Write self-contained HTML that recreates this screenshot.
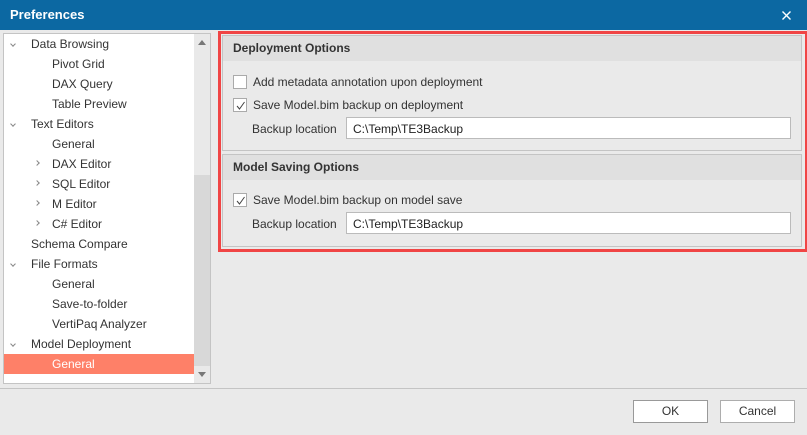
<!DOCTYPE html><html><head><style>
body{margin:0;width:807px;height:435px;background:#eaeaea;font-family:"Liberation Sans",sans-serif;font-size:12px;color:#333;position:relative;overflow:hidden}
.a{position:absolute}
.t{white-space:nowrap}
.cb{position:absolute;width:14px;height:14px;border:1px solid #aaa;background:#fff;box-sizing:border-box}
.cb svg{position:absolute;left:1px;top:1px}
.inp{position:absolute;background:#fff;border:1px solid #bbb;box-sizing:border-box;height:22px;padding:4px 6px;font-size:12px;color:#222}
.btn{position:absolute;background:#fff;border:1px solid #adadad;box-sizing:border-box;height:23px;width:75px;text-align:center;line-height:21px;color:#333}
.chev{position:absolute;left:11px;width:3px;height:3px;border-right:1px solid #888;border-bottom:1px solid #888;transform:rotate(45deg)}
.chr{position:absolute;left:35px;width:3px;height:3px;border-right:1px solid #888;border-bottom:1px solid #888;transform:rotate(-45deg)}
</style></head><body>
<div class="a" style="left:0;top:0;width:807px;height:30px;background:#0c68a2"></div>
<div class="a t" style="left:10px;top:7px;color:#fff;font-weight:bold;font-size:13px">Preferences</div>
<svg class="a" style="left:782px;top:11px" width="9" height="9"><path d="M0.5 0.5L8.5 8.5M8.5 0.5L0.5 8.5" stroke="#fff" stroke-width="1.4"/></svg>

<div class="a" style="left:3px;top:33px;width:208px;height:351px;background:#fff;border:1px solid #c4c4c4;box-sizing:border-box"></div>
<div class="a" style="left:194px;top:34px;width:16px;height:349px;background:#e9e9e9"></div>
<div class="a" style="left:194px;top:175px;width:16px;height:191px;background:#d8d8d8"></div>
<svg class="a" style="left:198px;top:40px" width="8" height="5"><path d="M0 5L4 0L8 5Z" fill="#777"/></svg>
<svg class="a" style="left:198px;top:372px" width="8" height="5"><path d="M0 0L4 5L8 0Z" fill="#777"/></svg>
<div class="a" style="left:4px;top:354px;width:190px;height:20px;background:#fe8068"></div>

<div class="chev" style="top:42px"></div><div class="a t" style="left:31px;top:37px">Data Browsing</div>
<div class="a t" style="left:52px;top:57px">Pivot Grid</div>
<div class="a t" style="left:52px;top:77px">DAX Query</div>
<div class="a t" style="left:52px;top:97px">Table Preview</div>
<div class="chev" style="top:122px"></div><div class="a t" style="left:31px;top:117px">Text Editors</div>
<div class="a t" style="left:52px;top:137px">General</div>
<div class="chr" style="top:161px"></div><div class="a t" style="left:52px;top:157px">DAX Editor</div>
<div class="chr" style="top:181px"></div><div class="a t" style="left:52px;top:177px">SQL Editor</div>
<div class="chr" style="top:201px"></div><div class="a t" style="left:52px;top:197px">M Editor</div>
<div class="chr" style="top:221px"></div><div class="a t" style="left:52px;top:217px">C# Editor</div>
<div class="a t" style="left:31px;top:237px">Schema Compare</div>
<div class="chev" style="top:262px"></div><div class="a t" style="left:31px;top:257px">File Formats</div>
<div class="a t" style="left:52px;top:277px">General</div>
<div class="a t" style="left:52px;top:297px">Save-to-folder</div>
<div class="a t" style="left:52px;top:317px">VertiPaq Analyzer</div>
<div class="chev" style="top:342px"></div><div class="a t" style="left:31px;top:337px">Model Deployment</div>
<div class="a t" style="left:52px;top:357px;color:#fff">General</div>

<div class="a" style="left:218px;top:31px;width:589px;height:221px;border:3px solid #f04545;border-right-width:2px;box-sizing:border-box"></div>
<div class="a" style="left:222px;top:35px;width:580px;height:116px;border:1px solid #c4c4c4;box-sizing:border-box"></div>
<div class="a" style="left:223px;top:36px;width:578px;height:25px;background:#e0e0e0"></div>
<div class="a t" style="left:233px;top:41px;font-weight:bold">Deployment Options</div>
<div class="cb" style="left:233px;top:75px"></div><div class="a t" style="left:253px;top:75px">Add metadata annotation upon deployment</div>
<div class="cb" style="left:233px;top:98px"><svg width="11" height="11"><path d="M2 6L4.5 9L9.5 2" stroke="#444" fill="none"/></svg></div><div class="a t" style="left:253px;top:98px">Save Model.bim backup on deployment</div>
<div class="a t" style="left:252px;top:122px">Backup location</div>
<div class="inp" style="left:346px;top:117px;width:445px">C:\Temp\TE3Backup</div>

<div class="a" style="left:222px;top:154px;width:580px;height:93px;border:1px solid #c4c4c4;box-sizing:border-box"></div>
<div class="a" style="left:223px;top:155px;width:578px;height:25px;background:#e0e0e0"></div>
<div class="a t" style="left:233px;top:160px;font-weight:bold">Model Saving Options</div>
<div class="cb" style="left:233px;top:193px"><svg width="11" height="11"><path d="M2 6L4.5 9L9.5 2" stroke="#444" fill="none"/></svg></div><div class="a t" style="left:253px;top:193px">Save Model.bim backup on model save</div>
<div class="a t" style="left:252px;top:217px">Backup location</div>
<div class="inp" style="left:346px;top:212px;width:445px">C:\Temp\TE3Backup</div>

<div class="a" style="left:0;top:388px;width:807px;height:1px;background:#c4c4c4"></div>
<div class="btn" style="left:633px;top:400px;border-color:#999">OK</div>
<div class="btn" style="left:720px;top:400px">Cancel</div>
</body></html>
